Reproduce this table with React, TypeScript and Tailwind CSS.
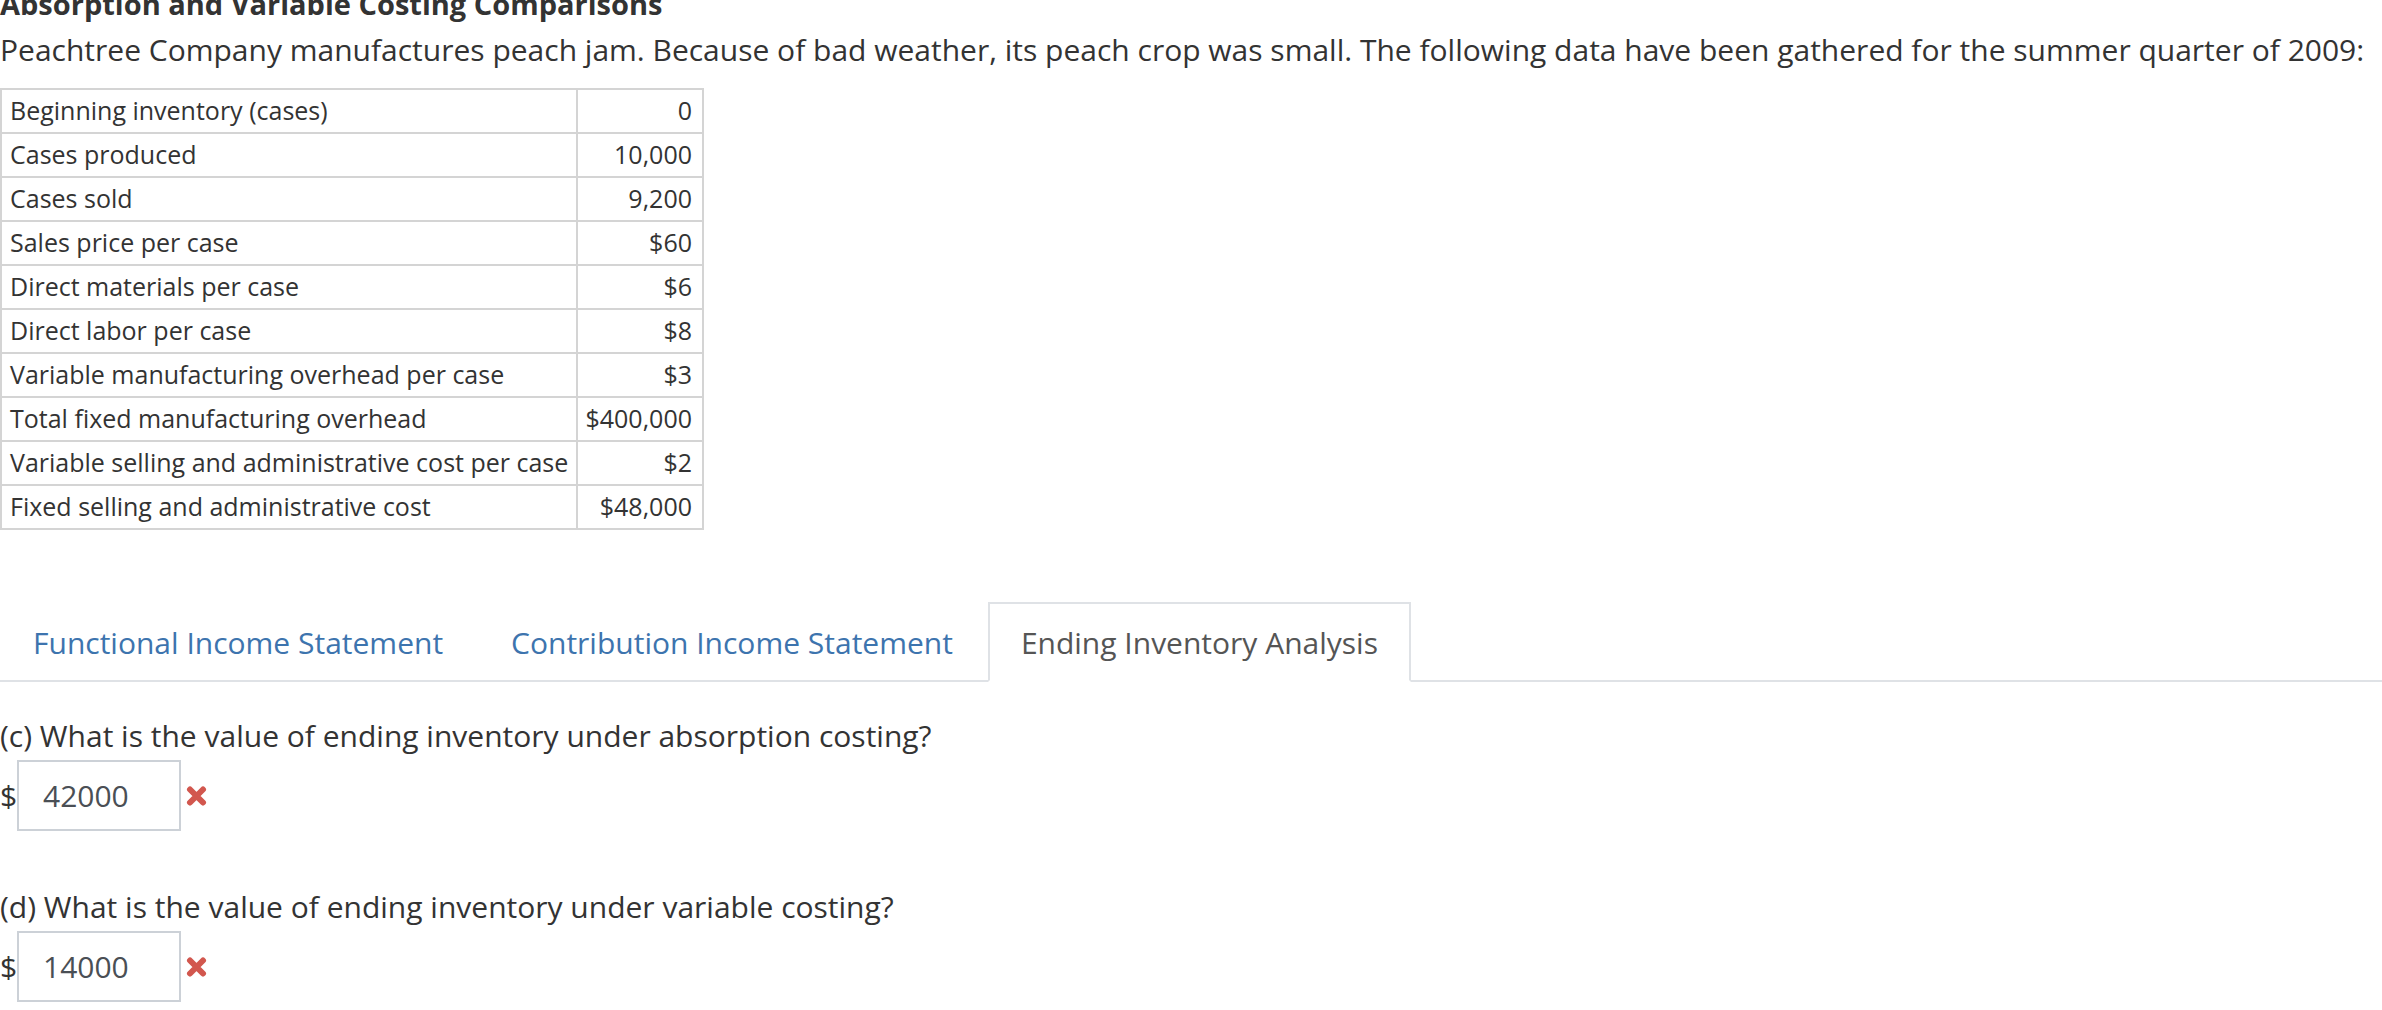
import { useState } from 'react';

// 원자료 표 (Peachtree Company, 2009 여름 분기)
const rows: [string, string][] = [
  ['Beginning inventory (cases)', '0'],
  ['Cases produced', '10,000'],
  ['Cases sold', '9,200'],
  ['Sales price per case', '$60'],
  ['Direct materials per case', '$6'],
  ['Direct labor per case', '$8'],
  ['Variable manufacturing overhead per case', '$3'],
  ['Total fixed manufacturing overhead', '$400,000'],
  ['Variable selling and administrative cost per case', '$2'],
  ['Fixed selling and administrative cost', '$48,000'],
];

const tabs = ['Functional Income Statement', 'Contribution Income Statement', 'Ending Inventory Analysis'];

function WrongMark() {
  return (
    <svg viewBox="0 0 20 20" className="w-[21px] h-[20px] ml-[5px]" aria-hidden>
      <path d="M3.5 3.5 L16.5 16.5 M16.5 3.5 L3.5 16.5" stroke="#d2574e" strokeWidth="6" strokeLinecap="round" />
    </svg>
  );
}

function Answer({ question, value }: { question: string; value: string }) {
  return (
    <div>
      <p className="text-[30px] leading-[40px] text-[#333]">{question}</p>
      <div className="mt-[4px] flex items-center">
        <span className="text-[30px] text-[#333] w-[17px]">$</span>
        <div className="w-[164px] h-[71px] border-2 border-[#ccd1d7] pl-[24px] flex items-center text-[30px] text-[#4a4f55]">
          {value}
        </div>
        <WrongMark />
      </div>
    </div>
  );
}

export default function App() {
  const [active, setActive] = useState(2);

  return (
    <div className="w-[2382px] h-[1010px] overflow-hidden bg-white font-['Open_Sans',sans-serif] text-[#333]">
      <h2 className="mt-[-16px] text-[29px] leading-[40px] font-bold text-[#333]">
        Absorption and Variable Costing Comparisons
      </h2>
      <p className="mt-[6px] text-[30px] leading-[40px] whitespace-nowrap">
        Peachtree Company manufactures peach jam. Because of bad weather, its peach crop was small. The following data
        have been gathered for the summer quarter of 2009:
      </p>

      <table className="mt-[18px] border-collapse text-[25px] text-[#333]">
        <tbody>
          {rows.map(([label, val]) => (
            <tr key={label}>
              <td className="w-[576px] h-[44px] border-2 border-[#d4d4d4] pl-[8px] whitespace-nowrap">{label}</td>
              <td className="w-[126px] h-[44px] border-2 border-[#d4d4d4] pr-[10px] text-right">{val}</td>
            </tr>
          ))}
        </tbody>
      </table>

      <div className="mt-[72px] flex border-b-2 border-[#dfe2e6]">
        {tabs.map((t, i) => (
          <button
            key={t}
            onClick={() => setActive(i)}
            className={
              i === active
                ? 'mr-[2px] mb-[-2px] h-[80px] px-[31px] border-2 border-[#dfe2e6] border-b-white bg-white text-[30px] text-[#555]'
                : 'mr-[2px] mb-[-2px] h-[80px] px-[31px] border-2 border-transparent text-[30px] text-[#3d74ae]'
            }
          >
            {t}
          </button>
        ))}
      </div>

      <div className="mt-[34px]">
        <Answer question="(c) What is the value of ending inventory under absorption costing?" value="42000" />
      </div>
      <div className="mt-[56px]">
        <Answer question="(d) What is the value of ending inventory under variable costing?" value="14000" />
      </div>
    </div>
  );
}
